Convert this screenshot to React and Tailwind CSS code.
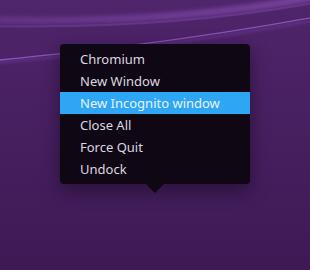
import React from "react";

const items = ["Chromium", "New Window", "New Incognito window", "Close All", "Force Quit", "Undock"];

export default function App() {
  return (
    <div className="relative w-[310px] h-[270px] overflow-hidden bg-gradient-to-b from-[#4f256b] to-[#3d1a54]" style={{ fontFamily: '"Noto Sans", sans-serif' }}>
      <svg className="absolute inset-0" width="310" height="270" viewBox="0 0 310 270">
        <defs>
          <linearGradient id="band" x1="0" y1="0" x2="1" y2="0">
            <stop offset="0" stopColor="#8a4fb8" stopOpacity="0.35" />
            <stop offset="0.6" stopColor="#9a5ccc" stopOpacity="0.45" />
            <stop offset="1" stopColor="#a064d4" stopOpacity="0.5" />
          </linearGradient>
        </defs>
        <path d="M-10 20 C 80 22, 200 20, 320 -4" stroke="url(#band)" strokeWidth="7" fill="none" style={{ filter: "blur(2px)" }} />
        <path d="M-10 26 C 80 28, 200 24, 320 2" stroke="#9b5fd0" strokeOpacity="0.25" strokeWidth="2" fill="none" />
        <path d="M-10 61 C 60 54, 180 42, 320 16" stroke="#a36ad8" strokeOpacity="0.7" strokeWidth="1.3" fill="none" />
        <path d="M-10 63 C 60 57, 180 45, 320 19" stroke="#8a4fbf" strokeOpacity="0.3" strokeWidth="3" fill="none" style={{ filter: "blur(1.5px)" }} />
      </svg>
      <div className="relative pt-[44px] pl-[60px]">
        <div className="relative w-[190px] rounded-[4px] bg-[#0f0713] py-[4px] shadow-[0_6px_18px_rgba(20,5,30,0.55)]">
          {items.map((t, i) => (
            <div
              key={t}
              className={
                "h-[22px] pl-[20px] flex items-center text-[13px] leading-none " +
                (i === 2 ? "bg-[#2fa6f4] text-[#e8f4fe]" : "text-[#dcd7e0]")
              }
            >
              {t}
            </div>
          ))}
          <div className="absolute left-[86px] top-full w-0 h-0 border-l-[9px] border-r-[9px] border-t-[9px] border-l-transparent border-r-transparent border-t-[#0f0713]" />
        </div>
      </div>
    </div>
  );
}
